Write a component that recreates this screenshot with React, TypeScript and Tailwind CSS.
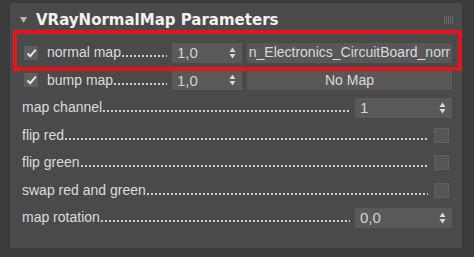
function Check() {
  return (
    <div className="flex h-[14px] w-[14px] items-center justify-center bg-[#5e5e5e]">
      <svg width="11" height="10" viewBox="0 0 11 10">
        <path d="M1.5 5.5 L4.2 8.2 L9.8 1.6" fill="none" stroke="#e6e6e6" strokeWidth="2" />
      </svg>
    </div>
  );
}

function EmptyBox() {
  return <div className="h-[15px] w-[15px] border border-[#5f5f5f] bg-[#565656]" />;
}

function Arrows() {
  return (
    <svg width="7" height="12" viewBox="0 0 7 12" className="shrink-0">
      <path d="M3.5 0.5 L6.5 5 L0.5 5 Z" fill="#d8d8d8" />
      <path d="M3.5 11.5 L6.5 7 L0.5 7 Z" fill="#d8d8d8" />
    </svg>
  );
}

function Spinner({ value, width }: { value: string; width: string }) {
  return (
    <div className={`flex h-[20px] ${width} shrink-0 items-center justify-between bg-[#595959] pl-[5px] pr-[6px]`}>
      <span className="text-[15px] leading-none text-[#d4d4d4]">{value}</span>
      <Arrows />
    </div>
  );
}

// label followed by a dotted leader that fills the remaining width
function Label({ text }: { text: string }) {
  return (
    <div className="flex min-w-0 flex-1 items-end leading-[21px]">
      <span className="shrink-0 whitespace-nowrap">{text}</span>
      <div className="mb-[6px] ml-[1px] h-[2px] min-w-0 flex-1 bg-[linear-gradient(to_right,#cfcfcf_2px,transparent_2px)] bg-[length:4px_2px] bg-repeat-x" />
    </div>
  );
}

function MapButton({ text }: { text: string }) {
  return (
    <div className="ml-[5px] flex h-[20px] w-[205px] shrink-0 items-center justify-center rounded-[2px] bg-[#585858] text-[14px] text-[#dadada]">
      <span className="whitespace-nowrap">{text}</span>
    </div>
  );
}

export default function App() {
  return (
    <div className="h-[257px] w-[474px] bg-[#3b3b3b] pb-[9px] pl-[10px] pr-[12px] pt-[3px] font-['Liberation_Sans',Arial,sans-serif] text-[14px] text-[#dcdcdc]">
      <div className="relative flex h-full flex-col rounded-tl-[3px] rounded-tr-[3px] bg-[#4a4a4a]">
        <div className="flex h-[36px] shrink-0 items-center pb-[2px] pl-[10px] pr-[9px]">
          <svg width="7" height="6" viewBox="0 0 7 6" className="mr-[9px]">
            <path d="M0 0 L7 0 L3.5 6 Z" fill="#b4b4b4" />
          </svg>
          <span className="flex-1 font-['DejaVu_Sans',sans-serif] text-[15px] font-bold text-[#f2f2f2]">
            VRayNormalMap Parameters
          </span>
          <svg width="9" height="8" viewBox="0 0 9 8">
            <path d="M0.5 0 V8 M2.5 0 V8 M4.5 0 V8 M6.5 0 V8 M8.5 0 V8" stroke="#6a6a6a" strokeWidth="1" />
          </svg>
        </div>

        <div className="flex h-[27.5px] items-center pl-[14px] pr-[10px]">
          <Check />
          <div className="ml-[9px] flex min-w-0 flex-1">
            <Label text="normal map" />
          </div>
          <div className="ml-[5px]">
            <Spinner value="1,0" width="w-[70px]" />
          </div>
          <MapButton text="n_Electronics_CircuitBoard_norr" />
        </div>

        <div className="flex h-[27.5px] items-center pl-[14px] pr-[10px]">
          <Check />
          <div className="ml-[9px] flex min-w-0 flex-1">
            <Label text="bump map" />
          </div>
          <div className="ml-[5px]">
            <Spinner value="1,0" width="w-[70px]" />
          </div>
          <MapButton text="No Map" />
        </div>

        <div className="flex h-[27.5px] items-center pl-[12px] pr-[10px]">
          <Label text="map channel" />
          <div className="ml-[5px]">
            <Spinner value="1" width="w-[97px]" />
          </div>
        </div>

        {["flip red", "flip green", "swap red and green"].map((t) => (
          <div key={t} className="flex h-[27.5px] items-center pl-[12px] pr-[13px]">
            <Label text={t} />
            <div className="ml-[6px]">
              <EmptyBox />
            </div>
          </div>
        ))}

        <div className="flex h-[27.5px] items-center pl-[12px] pr-[10px]">
          <Label text="map rotation" />
          <div className="ml-[5px]">
            <Spinner value="0,0" width="w-[97px]" />
          </div>
        </div>

        <div className="pointer-events-none absolute left-[3px] right-0 top-[27px] h-[41px] border-[4px] border-[#e3141a]" />
      </div>
    </div>
  );
}
